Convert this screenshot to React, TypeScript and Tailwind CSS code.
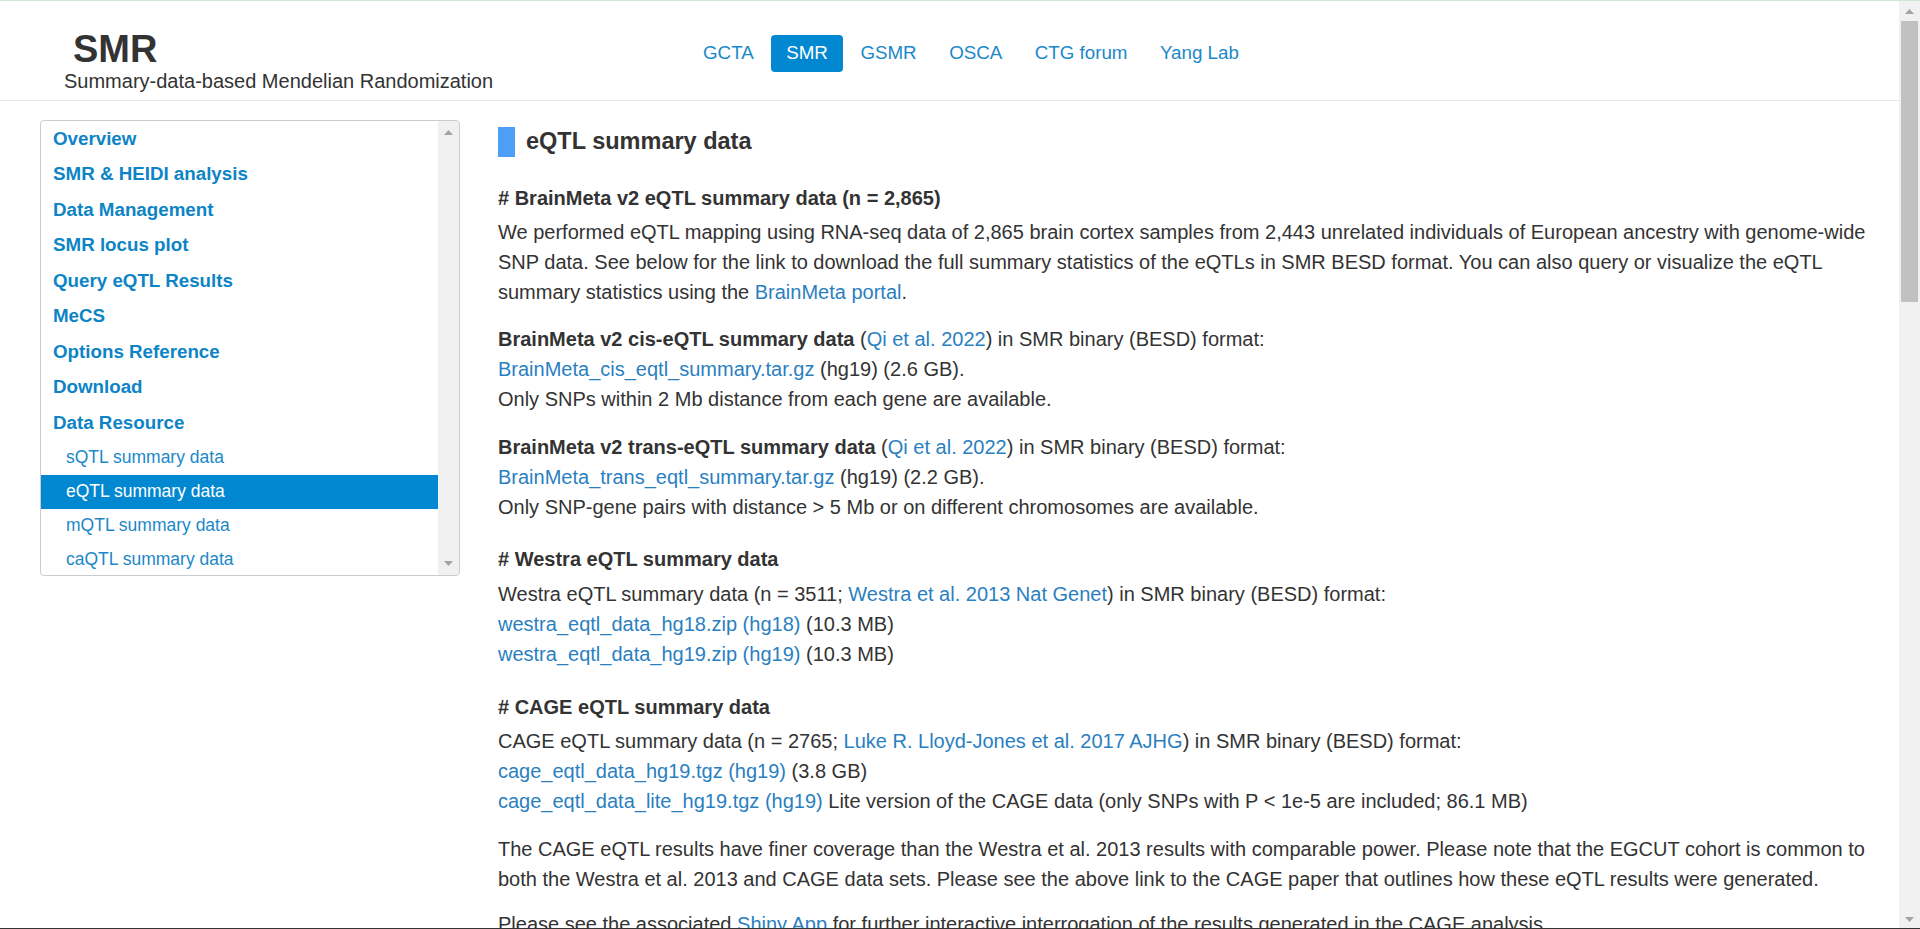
import React from "react";

const sans = "font-['Liberation_Sans',Arial,sans-serif]";

const navLinks = ["GCTA", "SMR", "GSMR", "OSCA", "CTG forum", "Yang Lab"];

const mainItems = [
  "Overview",
  "SMR & HEIDI analysis",
  "Data Management",
  "SMR locus plot",
  "Query eQTL Results",
  "MeCS",
  "Options Reference",
  "Download",
  "Data Resource",
];

const subItems = [
  "sQTL summary data",
  "eQTL summary data",
  "mQTL summary data",
  "caQTL summary data",
];

function A({ children }: { children: React.ReactNode }) {
  return <a className="text-[#2a7fc1] cursor-pointer">{children}</a>;
}

function Section({ children }: { children: React.ReactNode }) {
  return <div className="font-bold">{children}</div>;
}

function UpArrow() {
  return (
    <svg width="9" height="5" viewBox="0 0 9 5">
      <path d="M0 5 L4.5 0 L9 5 Z" fill="#a3a3a3" />
    </svg>
  );
}

function DownArrow() {
  return (
    <svg width="9" height="5" viewBox="0 0 9 5">
      <path d="M0 0 L4.5 5 L9 0 Z" fill="#a3a3a3" />
    </svg>
  );
}

function Sidebar() {
  return (
    <div className="ml-[40px] mt-[19px] w-[420px] h-[456px] shrink-0 border border-[#ccc] rounded-[4px] overflow-hidden flex">
      <div className="flex-1 overflow-hidden">
        {mainItems.map((item) => (
          <div
            key={item}
            className="h-[35.5px] flex items-center pl-[12px] text-[18.75px] font-bold text-[#0c84c6]"
          >
            {item}
          </div>
        ))}
        {subItems.map((item) => {
          const active = item === "eQTL summary data";
          return (
            <div
              key={item}
              className={
                active
                  ? "h-[34px] flex items-center pl-[25px] text-[17.5px] bg-[#0288d1] text-white"
                  : "h-[34px] flex items-center pl-[25px] text-[17.5px] text-[#1b88c9]"
              }
            >
              {item}
            </div>
          );
        })}
      </div>
      <div className="w-[21px] bg-[#f0f0f0] flex flex-col items-center justify-between py-[9px]">
        <UpArrow />
        <DownArrow />
      </div>
    </div>
  );
}

function Content() {
  return (
    <div className="ml-[38px] mt-[26px] w-[1385px] text-[#333]">
      <div className="h-[30px] flex items-center">
        <div className="w-[17px] h-[30px] bg-[#4d9ef7]" />
        <h2 className="ml-[11px] text-[23.5px] font-bold leading-none">eQTL summary data</h2>
      </div>

      <div className="mt-[26px] text-[20px] leading-[30px]">
        <Section># BrainMeta v2 eQTL summary data (n = 2,865)</Section>
        <p className="mt-[4px]">
          We performed eQTL mapping using RNA-seq data of 2,865 brain cortex samples from 2,443
          unrelated individuals of European ancestry with genome-wide SNP data. See below for the
          link to download the full summary statistics of the eQTLs in SMR BESD format. You can also
          query or visualize the eQTL summary statistics using the <A>BrainMeta portal</A>.
        </p>
        <p className="mt-[17px]">
          <b>BrainMeta v2 cis-eQTL summary data</b> (<A>Qi et al. 2022</A>) in SMR binary (BESD)
          format:
          <br />
          <A>BrainMeta_cis_eqtl_summary.tar.gz</A> (hg19) (2.6 GB).
          <br />
          Only SNPs within 2 Mb distance from each gene are available.
        </p>
        <p className="mt-[18px]">
          <b>BrainMeta v2 trans-eQTL summary data</b> (<A>Qi et al. 2022</A>) in SMR binary (BESD)
          format:
          <br />
          <A>BrainMeta_trans_eqtl_summary.tar.gz</A> (hg19) (2.2 GB).
          <br />
          Only SNP-gene pairs with distance &gt; 5 Mb or on different chromosomes are available.
        </p>

        <div className="mt-[22px]">
          <Section># Westra eQTL summary data</Section>
        </div>
        <p className="mt-[5px]">
          Westra eQTL summary data (n = 3511; <A>Westra et al. 2013 Nat Genet</A>) in SMR binary
          (BESD) format:
          <br />
          <A>westra_eqtl_data_hg18.zip (hg18)</A> (10.3 MB)
          <br />
          <A>westra_eqtl_data_hg19.zip (hg19)</A> (10.3 MB)
        </p>

        <div className="mt-[23px]">
          <Section># CAGE eQTL summary data</Section>
        </div>
        <p className="mt-[4px]">
          CAGE eQTL summary data (n = 2765; <A>Luke R. Lloyd-Jones et al. 2017 AJHG</A>) in SMR
          binary (BESD) format:
          <br />
          <A>cage_eqtl_data_hg19.tgz (hg19)</A> (3.8 GB)
          <br />
          <A>cage_eqtl_data_lite_hg19.tgz (hg19)</A> Lite version of the CAGE data (only SNPs with P
          &lt; 1e-5 are included; 86.1 MB)
        </p>
        <p className="mt-[18px]">
          The CAGE eQTL results have finer coverage than the Westra et al. 2013 results with
          comparable power. Please note that the EGCUT cohort is common to both the Westra et al.
          2013 and CAGE data sets. Please see the above link to the CAGE paper that outlines how
          these eQTL results were generated.
        </p>
        <p className="mt-[15px]">
          Please see the associated <A>Shiny App</A> for further interactive interrogation of the
          results generated in the CAGE analysis.
        </p>
      </div>
    </div>
  );
}

export default function App() {
  return (
    <div
      className={`w-full h-[929px] overflow-hidden flex border-t border-[#cfe6d5] border-b border-b-[#333] bg-white ${sans}`}
    >
      <div className="flex-1 min-w-0 overflow-hidden">
        <header className="h-[100px] border-b border-[#e7e7e7] flex">
          <div className="w-[688px] shrink-0 pl-[64px]">
            <div className="mt-[29px] ml-[9px] text-[38px] font-bold leading-none text-[#333]">
              SMR
            </div>
            <div className="mt-[3px] text-[20px] leading-none text-[#333]">
              Summary-data-based Mendelian Randomization
            </div>
          </div>
          <nav className="pt-[34px] flex gap-[2.5px]">
            {navLinks.map((l) => (
              <a
                key={l}
                className={
                  l === "SMR"
                    ? "h-[37px] px-[15px] flex items-center rounded-[4px] bg-[#0288d1] text-white text-[18.75px]"
                    : "h-[37px] px-[15px] flex items-center rounded-[4px] text-[#1b88c9] text-[18.75px]"
                }
              >
                {l}
              </a>
            ))}
          </nav>
        </header>
        <div className="flex items-start">
          <Sidebar />
          <Content />
        </div>
      </div>
      <div className="w-[21px] shrink-0 bg-[#f1f1f1] flex flex-col items-center">
        <div className="h-[20px] flex items-center">
          <UpArrow />
        </div>
        <div className="w-[17px] h-[281px] bg-[#c1c1c1]" />
        <div className="flex-1" />
        <div className="h-[18px] flex items-center">
          <DownArrow />
        </div>
      </div>
    </div>
  );
}
